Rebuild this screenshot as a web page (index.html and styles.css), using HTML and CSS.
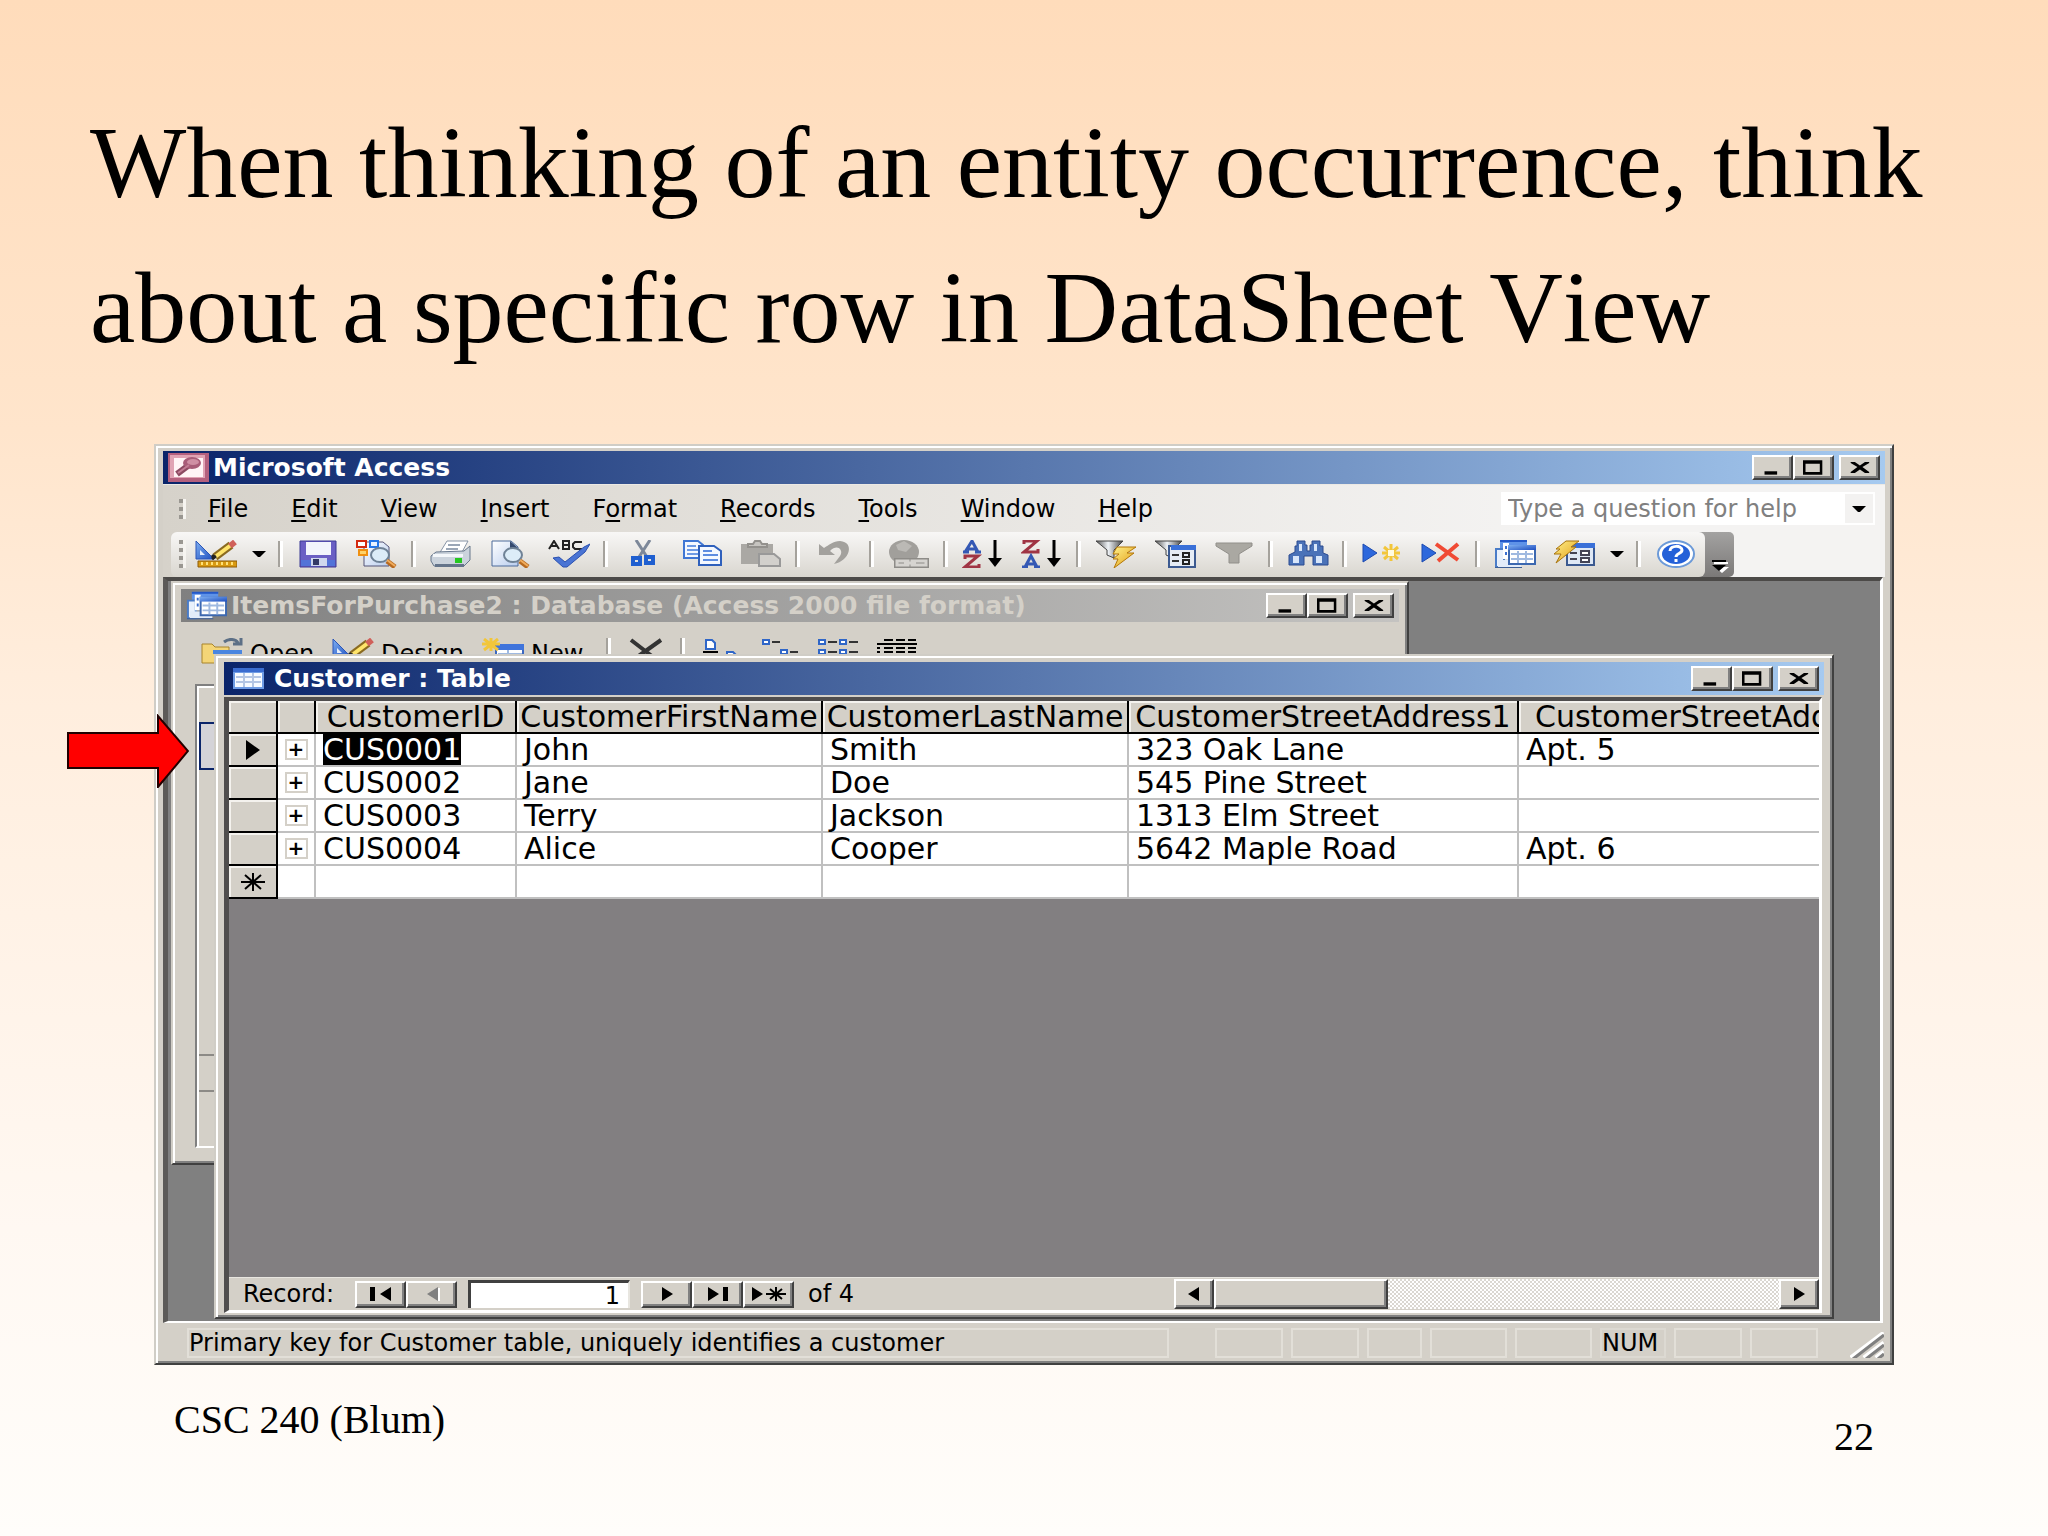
FILE: index.html
```html
<!DOCTYPE html>
<html lang="en">
<head>
<meta charset="utf-8">
<title>Entity occurrence in DataSheet View</title>
<link rel="stylesheet" href="styles.css">
</head>
<body>
<svg class="sprite" aria-hidden="true">
  <defs>
    <linearGradient id="blue" x1="0" y1="0" x2="1" y2="1"><stop offset="0" stop-color="#7fb0f2"/><stop offset="1" stop-color="#1f4fc0"/></linearGradient>
    <linearGradient id="page" x1="0" y1="0" x2="1" y2="1"><stop offset="0" stop-color="#fff"/><stop offset="1" stop-color="#b9cdee"/></linearGradient>
    <linearGradient id="steel" x1="0" y1="0" x2="1" y2="0"><stop offset="0" stop-color="#555"/><stop offset=".45" stop-color="#eef2f6"/><stop offset="1" stop-color="#444"/></linearGradient>
    <linearGradient id="gold" x1="0" y1="0" x2="1" y2="1"><stop offset="0" stop-color="#fff08a"/><stop offset="1" stop-color="#e09a10"/></linearGradient>
  </defs>
  <symbol id="i-min" viewBox="0 0 41 25"><path d="M11 17h15v4H11z"/></symbol>
  <symbol id="i-max" viewBox="0 0 41 25"><path fill-rule="evenodd" d="M8 4h23v17H8zM11 8v10h17V8z"/></symbol>
  <symbol id="i-close" viewBox="0 0 41 25"><path d="M10 6h5l6 4 6-4h5v1l-8 5 8 6v1h-5l-6-4-6 4h-5v-1l8-6-8-5z"/></symbol>
  <symbol id="i-dbwin" viewBox="0 0 42 28">
    <path fill="#5f93e8" d="M6 0h27v8H6z"/><path fill="#2458c8" d="M6 0h27v2H6z"/>
    <path fill="#e9f1fc" stroke="#4a7cc8" stroke-width="2" d="M2 9h8v18H2z"/><path fill="#fff" d="M9 3h6v16H9z"/><path fill="#3b6fd0" d="M11 6h2v3h-2zM11 12h2v3h-2z"/>
    <path fill="#e3ecf9" d="M4 20h23v7H4z"/><path fill="#3d5f96" d="M1 27h27v1H1z"/>
    <path fill="#fff" stroke="#3c68b0" stroke-width="2" d="M15 6h26v18H15z"/><path fill="url(#blue)" d="M14 5h28v5H14z"/>
    <path stroke="#9fb9e0" stroke-width="2" d="M17 14h22M17 19h22M24 11v12M32 11v12"/>
  </symbol>
  <symbol id="i-ruler" viewBox="0 0 42 28">
    <path fill="url(#blue)" stroke="#2a55b8" d="M1 1v18h18z"/><path fill="#e8effa" d="M5 10v5h5z"/>
    <path fill="#d99a12" stroke="#8c5a08" d="M3 21h39v6H3z"/><path stroke="#ffe27a" stroke-width="2" d="M7 22v3M12 22v3M17 22v3M22 22v3M27 22v3M32 22v3M37 22v3"/>
    <path stroke="#8a6a20" stroke-width="8" d="M20 17L36 5"/><path stroke="#ffe46a" stroke-width="4" d="M20 17L36 5"/><path stroke="#d0605a" stroke-width="6" d="M35 6l5-4"/><path stroke="#222" stroke-width="3" d="M17 19l4-3M17 15l3 3"/>
  </symbol>
  <symbol id="i-glass" viewBox="0 0 42 28">
    <ellipse cx="24" cy="15" rx="9" ry="7" fill="#dcecf8" stroke="#6f8296" stroke-width="2"/><path stroke="#b86a20" stroke-width="5" d="M31 21l8 6"/><path stroke="#f0ac5c" stroke-width="2" d="M31 20l8 6"/>
  </symbol>
  <symbol id="i-funnel" viewBox="0 0 42 28"><path fill="url(#steel)" stroke="#444" d="M1 1h27l-9 9v8l-7-3v-5z"/></symbol>
  <symbol id="i-bolt" viewBox="0 0 42 28"><path fill="url(#gold)" stroke="#b37708" d="M22 7h19l-9 6h7L19 28l4-9h-5l6-5h-6z"/></symbol>
  <symbol id="i-az" viewBox="0 0 42 28"><path stroke="#000" stroke-width="3" d="M33 0v22"/><path fill="#000" d="M26 18h14l-7 9z"/></symbol>
  <symbol id="i-down" viewBox="0 0 14 8"><path d="M0 1h14L8 7H6z"/></symbol>
</svg>

<main class="slide">
  <h1 class="headline">When thinking of an entity occurrence, think about a specific row in DataSheet View</h1>

  <section class="frame app">
    <svg class="pointer" viewBox="0 0 122 74" aria-hidden="true"><path d="M1 19h90V2l30 35-30 36V54H1z"/></svg>

    <header class="titlebar">
      <svg class="t-icon" viewBox="0 0 41 29"><path fill="#b4607e" d="M0 0h41v29H0z"/><path fill="#e0a3b4" d="M2 2h35v23H2z"/><path fill="#fff4f6" d="M6 5h29v19H6z"/><path fill="none" stroke="#8c4a62" stroke-width="6" d="M9 21l12-9"/><ellipse cx="24" cy="10" rx="9" ry="6" fill="#a85c78"/><ellipse cx="25" cy="9" rx="6" ry="3" fill="#cf8fa4"/><path stroke="#c27c94" stroke-width="2" d="M10 20l11-8"/></svg>
      <span class="t-text">Microsoft Access</span>
      <span class="t-buttons">
        <button class="wbtn" aria-label="Minimize"><svg><use href="#i-min"/></svg></button>
        <button class="wbtn" aria-label="Maximize"><svg><use href="#i-max"/></svg></button>
        <button class="wbtn wbtn-close" aria-label="Close"><svg><use href="#i-close"/></svg></button>
      </span>
    </header>

    <div class="bars">
      <nav class="menubar">
        <span class="grip grip-3"></span>
        <button class="menu"><u>F</u>ile</button>
        <button class="menu"><u>E</u>dit</button>
        <button class="menu"><u>V</u>iew</button>
        <button class="menu"><u>I</u>nsert</button>
        <button class="menu">F<u>o</u>rmat</button>
        <button class="menu"><u>R</u>ecords</button>
        <button class="menu"><u>T</u>ools</button>
        <button class="menu"><u>W</u>indow</button>
        <button class="menu"><u>H</u>elp</button>
        <span class="ask">
          <input class="ask-input" type="text" placeholder="Type a question for help" aria-label="Type a question for help">
          <button class="ask-drop" aria-label="Show recent questions"><svg class="caret"><use href="#i-down"/></svg></button>
        </span>
      </nav>

      <div class="toolrow">
        <div class="toolbar">
          <span class="grip"></span>
          <button class="tool" aria-label="View"><svg><use href="#i-ruler"/></svg></button>
          <button class="tool-drop" aria-label="View options"><svg class="caret"><use href="#i-down"/></svg></button>
          <span class="sep"></span>
          <button class="tool" aria-label="Save"><svg viewBox="0 0 42 28"><path fill="#6a5fc4" stroke="#3b3a94" d="M3 1h36v26H3z"/><path fill="#5273d8" d="M4 20h34v6H4z"/><path fill="#f2f5fc" d="M9 2h25v13H9z"/><path fill="#cfd8ee" d="M14 18h16v8H14z"/><path fill="#333a66" d="M16 19h6v6h-6z"/></svg></button>
          <button class="tool" aria-label="File search"><svg viewBox="0 0 42 28"><path fill="url(#page)" stroke="#557" d="M8 2h19l6 5v19H8z"/><path fill="#fff" stroke="#d42a10" stroke-width="2" d="M1 1h9v6H1z"/><path fill="#e8f2ff" stroke="#2476e8" stroke-width="2" d="M14 1h8v6h-8z"/><path fill="#ffd36a" stroke="#f09010" stroke-width="2" d="M3 10h8v5H3z"/><use href="#i-glass"/></svg></button>
          <span class="sep"></span>
          <button class="tool" aria-label="Print"><svg viewBox="0 0 42 28"><path fill="#fff" stroke="#8794a6" d="M17 1h21l-7 13H9z"/><path stroke="#9aa6b6" stroke-width="2" d="M18 5h12M16 9h12"/><path fill="#cbd3dc" stroke="#68788c" d="M6 12l28-1 6-5v14l-6 6H4l-3-5v-5z"/><path fill="#f4f7fa" d="M3 14h30v3H3z"/><path fill="#25c820" d="M25 18h7v5h-7z"/><path fill="#64748a" d="M5 24h29v3H5z"/></svg></button>
          <button class="tool" aria-label="Print preview"><svg viewBox="0 0 42 28"><path fill="url(#page)" stroke="#4c6a9a" d="M3 1h19l7 6v19H3z"/><path fill="#34496e" d="M21 1l8 7h-8z"/><use href="#i-glass"/></svg></button>
          <button class="tool" aria-label="Spelling"><svg viewBox="0 0 42 28"><path fill="none" stroke="#222" stroke-width="2" d="M1 9l5-8 5 8M3 6h6M15 1v8h6V5h-6 6V1zM34 2h-7l-2 2v3l2 2h7"/><path fill="#4a74d4" stroke="#2a50b0" d="M5 18l6-1 6 5L36 7l6-3-5 8-18 15h-4z"/></svg></button>
          <span class="sep"></span>
          <button class="tool" aria-label="Cut"><svg viewBox="0 0 42 28"><path stroke="#7d8899" stroke-width="3" d="M14 0l11 17M28 0L17 17"/><path fill="none" stroke="#1f5fd0" stroke-width="4" d="M11 18h7v6h-7zM24 17h7v6h-7z"/></svg></button>
          <button class="tool" aria-label="Copy"><svg viewBox="0 0 42 28"><path fill="#f4f8ff" stroke="#3f76d4" stroke-width="2" d="M3 1h14l5 4v13H3z"/><path stroke="#6e9ae4" stroke-width="2" d="M6 6h9M6 10h12M6 14h12"/><path fill="#f4f8ff" stroke="#2f60bc" stroke-width="2" d="M18 6h15l7 5v14H18z"/><path stroke="#5d8ce0" stroke-width="2" d="M22 11h9M22 15h15M22 20h15"/></svg></button>
          <button class="tool" aria-label="Paste" disabled><svg viewBox="0 0 42 28"><path fill="#aaa8a4" d="M1 4h32v20H1z"/><path fill="#c6c4c0" stroke="#93918d" stroke-width="2" d="M8 7V4h5l2-3h5l2 3h5v3z"/><path fill="#d2d0cc" stroke="#999" stroke-width="2" d="M19 14h15l6 5v7H19z"/></svg></button>
          <span class="sep"></span>
          <button class="tool" aria-label="Undo" disabled><svg viewBox="0 0 42 28"><path fill="#a3a19d" d="M5 4v11h16l-5-4c8-8 14 0 10 5l-6 8c16-3 21-22 6-23-7 0-11 4-16 7z"/></svg></button>
          <span class="sep"></span>
          <button class="tool" aria-label="Insert hyperlink" disabled><svg viewBox="0 0 42 28"><ellipse cx="16" cy="12" rx="15" ry="12" fill="#a19f9b"/><path fill="#bbb9b5" d="M8 5l8-4 8 5-6 6-8-2z"/><path fill="none" stroke="#8e8c88" stroke-width="6" d="M9 21h11v4H9zM24 21h14v4H24zM16 23h12"/><path fill="none" stroke="#d6d4d0" stroke-width="3" d="M9 21h11v4H9zM24 21h14v4H24zM16 23h12"/></svg></button>
          <span class="sep"></span>
          <button class="tool" aria-label="Sort ascending"><svg viewBox="0 0 42 28"><path fill="none" stroke="#3458b4" stroke-width="3" d="M3 12l7-11 6 11M6 9h8M1 12h6M13 12h6"/><path fill="none" stroke="#a03444" stroke-width="3" d="M3 19v-3h13L3 27h14v-3"/><use href="#i-az"/></svg></button>
          <button class="tool" aria-label="Sort descending"><svg viewBox="0 0 42 28"><path fill="none" stroke="#a03444" stroke-width="3" d="M3 4V1h13L3 12h14V9"/><path fill="none" stroke="#3458b4" stroke-width="3" d="M4 27l6-11 6 11M6 24h8M1 27h6M13 27h6"/><use href="#i-az"/></svg></button>
          <span class="sep"></span>
          <button class="tool" aria-label="Filter by selection"><svg viewBox="0 0 42 28"><use href="#i-funnel"/><use href="#i-bolt"/></svg></button>
          <button class="tool" aria-label="Filter by form"><svg viewBox="0 0 42 28"><use href="#i-funnel"/><path fill="#e6ecf4" stroke="#3c5a90" stroke-width="2" d="M15 6h26v21H15z"/><path fill="#3a70d8" d="M17 5h25v5H17z"/><path stroke="#333" stroke-width="2" d="M18 15h7M18 21h7"/><path fill="none" stroke="#222" stroke-width="2" d="M29 13h6v4h-6zM29 20h6v4h-6z"/></svg></button>
          <button class="tool" aria-label="Apply filter" disabled><svg viewBox="0 0 42 28"><path fill="#aaa8a2" stroke="#918f8a" d="M3 3h36v3L26 14v9H16v-9L3 6z"/></svg></button>
          <span class="sep"></span>
          <button class="tool" aria-label="Find"><svg viewBox="0 0 42 28"><path fill="#4a72b8" stroke="#2a4a90" d="M10 1h8v4h2v6h3V5h2V1h8v5h3v7l5 2v10H26v-9h-9v9H2V15l6-3V6h2z"/><path fill="#d8e6fa" d="M6 16h6v7H6zM29 16h6v7h-6zM12 4h3v7h-3zM27 4h3v7h-3z"/></svg></button>
          <span class="sep"></span>
          <button class="tool" aria-label="New record"><svg viewBox="0 0 42 28"><path fill="#2d68dc" stroke="#1d4bb0" d="M2 4l14 9-14 9z"/><path stroke="#f2c63a" stroke-width="3" d="M30 4v17M21 13h18M23 7l14 12M37 7L23 19"/><path fill="#fffbe0" d="M27 10h6v6h-6z"/></svg></button>
          <button class="tool" aria-label="Delete record"><svg viewBox="0 0 42 28"><path fill="#2d68dc" stroke="#1d4bb0" d="M2 4l14 9-14 9z"/><path stroke="#f04a34" stroke-width="4" d="M16 4l22 16M38 4L18 21"/></svg></button>
          <span class="sep"></span>
          <button class="tool" aria-label="Database window"><svg><use href="#i-dbwin"/></svg></button>
          <button class="tool" aria-label="New object"><svg viewBox="0 0 42 28"><path fill="#dfe8f5" stroke="#3c5a90" stroke-width="2" d="M14 4h27v21H14z"/><path fill="#3a70d8" d="M14 3h28v5H14z"/><path stroke="#445" stroke-width="2" d="M17 13h7M17 19h7"/><path fill="#fff" stroke="#445" stroke-width="2" d="M28 11h8v4h-8zM28 18h8v4h-8z"/><path fill="url(#gold)" stroke="#a8740c" d="M13 1h13l-8 6h5L3 23l5-9H1l6-5H3z"/></svg></button>
          <button class="tool-drop" aria-label="New object options"><svg class="caret"><use href="#i-down"/></svg></button>
          <span class="sep"></span>
          <button class="tool" aria-label="Help"><svg viewBox="0 0 42 28"><ellipse cx="21" cy="14" rx="18" ry="13" fill="#fff" stroke="#6c9ad8" stroke-width="2"/><ellipse cx="21" cy="14" rx="14" ry="10" fill="#2460d8"/><path fill="none" stroke="#fff" stroke-width="3" d="M15 11c0-6 12-6 12-1 0 4-6 3-6 7M21 19v3"/></svg></button>
        </div>
        <button class="overflow" aria-label="Toolbar options"><svg viewBox="0 0 18 14"><path fill="#fff" d="M3 3h14v2H3zM4 8h14l-7 6z"/><path fill="#000" d="M1 1h14v2H1zM1 6h14l-7 6z"/></svg></button>
      </div>
    </div>

    <div class="workspace">
      <section class="frame child db-window">
        <header class="titlebar titlebar-off">
          <svg class="t-icon"><use href="#i-dbwin"/></svg>
          <span class="t-text">ItemsForPurchase2 : Database (Access 2000 file format)</span>
          <span class="t-buttons">
            <button class="wbtn" aria-label="Minimize"><svg><use href="#i-min"/></svg></button>
            <button class="wbtn" aria-label="Maximize"><svg><use href="#i-max"/></svg></button>
            <button class="wbtn wbtn-close" aria-label="Close"><svg><use href="#i-close"/></svg></button>
          </span>
        </header>
        <div class="db-tools">
          <button class="db-tool"><svg viewBox="0 0 42 28"><path fill="#f4d577" stroke="#a8842c" d="M1 6h10l3 3h14v16H1z"/><path fill="#4a86e0" d="M12 12h29v4H12z"/><path fill="none" stroke="#5c6f86" stroke-width="3" d="M23 4c5-4 12-3 14 1M40 0v6h-8"/></svg>Open</button>
          <button class="db-tool"><svg><use href="#i-ruler"/></svg>Design</button>
          <button class="db-tool"><svg viewBox="0 0 42 28"><path fill="#fff" stroke="#3c68c0" stroke-width="2" d="M14 7h27v19H14z"/><path fill="#3f74dc" d="M14 6h28v6H14z"/><path stroke="#9fb9e0" stroke-width="2" d="M16 16h24M26 12v13"/><path stroke="#f2c63a" stroke-width="3" d="M9 0v13M0 6h18M2 1l14 11M16 1L2 12"/></svg>New</button>
          <span class="sep"></span>
          <button class="tool" aria-label="Delete"><svg viewBox="0 0 42 28"><path stroke="#333" stroke-width="4" d="M6 2l26 20M36 2L8 22"/></svg></button>
          <span class="sep"></span>
          <button class="tool" aria-label="Large icons"><svg viewBox="0 0 42 28"><path fill="#fff" stroke="#2f66c8" stroke-width="2" d="M7 2h6l3 3v6H7z"/><path stroke="#000" stroke-width="2" d="M4 14h15"/><path fill="#fff" stroke="#2f66c8" stroke-width="2" d="M28 14h6l3 3v6h-9z"/></svg></button>
          <button class="tool" aria-label="Small icons"><svg viewBox="0 0 42 28"><path fill="#fff" stroke="#2f66c8" stroke-width="2" d="M5 2h6v4H5zM23 12h6v4h-6z"/><path stroke="#333" stroke-width="2" d="M14 4h8M32 14h8"/></svg></button>
          <button class="tool" aria-label="List"><svg viewBox="0 0 42 28"><path fill="#fff" stroke="#2f66c8" stroke-width="2" d="M2 2h6v4H2zM23 2h6v4h-6zM2 12h6v4H2zM23 12h6v4h-6z"/><path stroke="#333" stroke-width="2" d="M11 4h9M32 4h9M11 14h9M32 14h9"/></svg></button>
          <button class="tool" aria-label="Details"><svg viewBox="0 0 42 28"><path stroke="#000" stroke-width="2" d="M8 2h9M20 2h9M32 2h8M1 6h40M8 10h9M20 10h9M32 10h8M8 14h9M20 14h9M32 14h8M1 10h3M1 14h3"/></svg></button>
        </div>
        <div class="db-groups"><div class="db-current"></div><div class="db-fold"></div></div>
      </section>

      <section class="frame child table-window">
        <header class="titlebar">
          <svg class="t-icon" viewBox="0 0 41 29"><path fill="#6f9ce4" d="M4 4h31v21H4z"/><path fill="#3a6cd0" d="M4 4h31v4H4z"/><path fill="#f8fbff" d="M6 9h27v14H6z"/><path stroke="#b4c6e4" stroke-width="2" d="M7 13h25M7 18h25M15 9v14M24 9v14"/></svg>
          <span class="t-text">Customer : Table</span>
          <span class="t-buttons">
            <button class="wbtn" aria-label="Minimize"><svg><use href="#i-min"/></svg></button>
            <button class="wbtn" aria-label="Maximize"><svg><use href="#i-max"/></svg></button>
            <button class="wbtn wbtn-close" aria-label="Close"><svg><use href="#i-close"/></svg></button>
          </span>
        </header>
        <div class="sheet">
          <div class="sheet-rows">
            <table class="grid">
              <colgroup><col class="c-select"><col class="c-expand"><col class="c-id"><col class="c-name"><col class="c-name"><col class="c-street"><col></colgroup>
              <thead>
                <tr><th></th><th></th><th>CustomerID</th><th>CustomerFirstName</th><th>CustomerLastName</th><th>CustomerStreetAddress1</th><th class="cut">CustomerStreetAddress2</th></tr>
              </thead>
              <tbody>
                <tr><th><svg class="mark" viewBox="0 0 16 20"><path d="M1 0l14 10L1 20z"/></svg></th><td><button class="expand" aria-label="Expand">+</button></td><td><mark class="picked">CUS0001</mark></td><td>John</td><td>Smith</td><td>323 Oak Lane</td><td>Apt. 5</td></tr>
                <tr><th></th><td><button class="expand" aria-label="Expand">+</button></td><td>CUS0002</td><td>Jane</td><td>Doe</td><td>545 Pine Street</td><td></td></tr>
                <tr><th></th><td><button class="expand" aria-label="Expand">+</button></td><td>CUS0003</td><td>Terry</td><td>Jackson</td><td>1313 Elm Street</td><td></td></tr>
                <tr><th></th><td><button class="expand" aria-label="Expand">+</button></td><td>CUS0004</td><td>Alice</td><td>Cooper</td><td>5642 Maple Road</td><td>Apt. 6</td></tr>
                <tr><th><svg class="star" viewBox="0 0 24 18"><path d="M12 0v18M0 9h24M4 2l16 14M20 2L4 16"/></svg></th><td></td><td></td><td></td><td></td><td></td><td></td></tr>
              </tbody>
            </table>
          </div>
          <div class="recordbar">
            <label class="rec-label" for="rec">Record:</label>
            <button class="rbtn" aria-label="First record"><svg viewBox="0 0 24 14"><path d="M1 0h5v14H1zM22 0v14L11 7z"/></svg></button>
            <button class="rbtn" aria-label="Previous record" disabled><svg viewBox="0 0 24 14"><path fill="#fff" d="M18 1v13h2V1z"/><path fill="#808080" d="M18 0v14L7 7z"/></svg></button>
            <input class="rec-input" id="rec" type="text" value="1">
            <button class="rbtn" aria-label="Next record"><svg viewBox="0 0 24 14"><path d="M7 0v14l11-7z"/></svg></button>
            <button class="rbtn" aria-label="Last record"><svg viewBox="0 0 24 14"><path d="M2 0v14l11-7zM17 0h5v14h-5z"/></svg></button>
            <button class="rbtn" aria-label="New record"><svg class="wide" viewBox="0 0 34 14"><path d="M0 0v14l11-7z"/><path fill="none" stroke="#000" stroke-width="2" d="M24 0v14M14 7h20M18 2l12 10M30 2L18 12"/></svg></button>
            <span class="rec-total">of 4</span>
            <div class="scroll">
              <button class="sbtn" aria-label="Scroll left"><svg viewBox="0 0 12 14"><path d="M11 0v14L0 7z"/></svg></button>
              <div class="track"><div class="thumb"></div></div>
              <button class="sbtn" aria-label="Scroll right"><svg viewBox="0 0 12 14"><path d="M1 0v14l11-7z"/></svg></button>
            </div>
          </div>
        </div>
      </section>
    </div>

    <footer class="statusbar">
      <span class="pane pane-main">Primary key for Customer table, uniquely identifies a customer</span>
      <span class="pane"></span><span class="pane"></span><span class="pane pane-s"></span><span class="pane pane-l"></span><span class="pane pane-l"></span>
      <span class="pane pane-num">NUM</span>
      <span class="pane"></span><span class="pane"></span>
      <svg class="resize" viewBox="0 0 34 26"><path stroke="#fff" stroke-width="5" d="M1 26L34 1M14 26l20-15M26 26l8-6"/><path stroke="#808080" stroke-width="3" d="M3 27L34 3M16 27l18-14M28 27l6-5"/></svg>
    </footer>
  </section>

  <footer class="foot"><span>CSC 240 (Blum)</span><span class="page-no">22</span></footer>
</main>
</body>
</html>
```
FILE: styles.css
```css
* { box-sizing: border-box; }

body {
  margin: 0;
  font-family: "DejaVu Sans", Verdana, sans-serif;
  font-size: 24px;
  color: #000;
}

button, input {
  margin: 0;
  padding: 0;
  border: 0;
  border-radius: 0;
  background: none;
  color: inherit;
  font: inherit;
}

svg { display: block; flex: none; fill: none; }
.sprite { position: absolute; width: 0; height: 0; }

/* Slide */
.slide {
  display: flex;
  flex-direction: column;
  min-height: 100vh;
  padding-top: 90px;
  background: linear-gradient(#ffdcbb, #ffe5cc 28%, #ffeede 46%, #fff8f2 80%, #fffdfa);
}

.headline {
  margin: 0 88px 64px 90px;
  font: 400 102px/145px "Liberation Serif", "Times New Roman", serif;
  font-kerning: none;
}

.foot {
  display: flex;
  justify-content: space-between;
  height: 171px;
  padding: 32px 174px 0;
  font: 40px/46px "Liberation Serif", "Times New Roman", serif;
}
.page-no { padding-top: 17px; }

.pointer {
  position: absolute;
  z-index: 5;
  left: -89px;
  top: 268px;
  width: 122px;
  height: 74px;
  fill: #f00;
  stroke: #200;
  stroke-width: 2px;
}

/* Window frames */
.frame {
  display: flex;
  flex-direction: column;
  border: 2px solid;
  border-color: #d0cdc6 #404040 #404040 #d0cdc6;
  background: #d4d0c8;
  box-shadow: inset 2px 2px #fff, inset -2px -2px #808080;
}
.app { position: relative; flex: 1; margin: 0 154px; padding: 5px 7px; }
.child { position: absolute; padding: 6px 8px 4px; }
.db-window { left: 3px; top: 0; right: 471px; bottom: 156px; }
.table-window { left: 46px; top: 73px; right: 46px; bottom: 2px; }

.titlebar {
  display: flex;
  align-items: center;
  gap: 4px;
  height: 33px;
  padding: 0 5px;
  background: linear-gradient(90deg, #0a246a, #a6caf0);
  color: #fff;
  font-weight: 700;
  font-size: 25px;
  line-height: 30px;
  white-space: nowrap;
}
.titlebar-off { background: linear-gradient(90deg, #808080, #c4c3c1); color: #d4d0c8; }
.t-icon { width: 41px; height: 29px; }
.t-buttons { display: flex; margin-left: auto; }

.wbtn, .rbtn, .sbtn, .thumb {
  border: 2px solid;
  border-color: #fff #404040 #404040 #fff;
  background: #d4d0c8;
  box-shadow: inset -2px -2px #808080;
}
.wbtn { width: 41px; height: 25px; }
.wbtn svg { width: 37px; height: 21px; fill: #000; }
.wbtn-close { margin-left: 5px; }

/* Menu and toolbars */
.bars { border-top: 1px solid #ece9e4; background: linear-gradient(90deg, #d6d2ca, #f4f3f2 80%); }
.menubar { display: flex; align-items: center; height: 47px; padding: 0 10px 0 16px; }
.menu { margin-right: 43px; line-height: 30px; }
.menu u { text-decoration-thickness: 2px; text-underline-offset: 3px; }

.grip {
  width: 7px;
  height: 28px;
  background: repeating-linear-gradient(#9a9791 0 4px, transparent 4px 8px);
  border-right: 3px solid #f6f4f0;
}
.grip-3 { height: 20px; margin-right: 22px; }

.ask { display: flex; width: 374px; height: 33px; margin-left: auto; background: #fff; }
.ask-input { flex: 1; min-width: 0; padding-left: 7px; line-height: 30px; }
.ask-input::placeholder { color: #808080; opacity: 1; }
.ask-drop { display: flex; align-items: center; justify-content: center; width: 28px; margin: 2px; background: #f3f2f1; }
.caret { width: 14px; height: 8px; fill: #000; }

.toolrow { display: flex; height: 45px; padding-left: 8px; }
.toolbar {
  z-index: 1;
  display: flex;
  align-items: center;
  padding: 0 0 2px 8px;
  border-radius: 6px;
  background: linear-gradient(#f8f7f6, #d9d6cf);
}
.tool { display: flex; justify-content: center; width: 59px; }
.tool svg, .db-tool svg { width: 42px; height: 28px; }
.tool-drop { display: flex; justify-content: center; width: 28px; }
.sep { width: 5px; height: 26px; margin: 0 5px; border-left: 2px solid #a5a29c; border-right: 3px solid #fff; }
.overflow {
  display: flex;
  align-items: flex-end;
  justify-content: flex-end;
  width: 36px;
  margin-left: -7px;
  padding: 0 5px 4px 0;
  border-radius: 0 5px 5px 0;
  background: linear-gradient(#a3a2a1, #7b7978);
}
.overflow svg { width: 18px; height: 14px; }

/* Workspace */
.workspace {
  position: relative;
  flex: 1;
  margin-right: 2px;
  border: solid;
  border-width: 4px 3px 2px 5px;
  border-color: #4c4a48 #fff #fff #5c5a58;
  background: #808080;
}

.db-tools { display: flex; align-items: flex-start; height: 62px; padding: 16px 0 0 20px; }
.db-tool { display: flex; gap: 7px; margin-right: 18px; line-height: 32px; }
.db-groups {
  flex: 1;
  display: flex;
  flex-direction: column;
  margin: 0 14px 11px;
  padding: 36px 2px 0;
  border: 2px solid;
  border-color: #808080 #fff #fff #808080;
  box-shadow: inset 2px 2px #fff;
}
.db-current { height: 48px; border: 2px solid #0a246a; background: #d4d3d8; }
.db-fold { height: 38px; margin-top: auto; margin-bottom: 54px; border: 2px solid #8c8a86; border-width: 2px 0; }

/* Datasheet */
.sheet {
  flex: 1;
  display: flex;
  flex-direction: column;
  min-height: 0;
  margin: 2px 2px 0 0;
  border: solid;
  border-width: 4px 3px 3px 5px;
  border-color: #504e4e #fff #fff #504e4e;
  background: #827f81;
}
.sheet-rows { flex: 1; overflow: hidden; }

.grid { width: 100%; table-layout: fixed; border-collapse: separate; border-spacing: 0; font-size: 30px; line-height: 31px; }
.c-select { width: 49px; }
.c-expand { width: 38px; }
.c-id { width: 201px; }
.c-name { width: 306px; }
.c-street { width: 390px; }
.grid th, .grid td { height: 33px; padding: 0 0 0 7px; white-space: nowrap; text-align: left; font-weight: 400; border: solid; border-width: 0 2px 2px 0; }
.grid td { border-color: #c0c0c0; background: #fff; }
.grid th { padding: 0; border-color: #000; background: #d4d0c8; box-shadow: inset 2px 2px #f4f2ee; text-align: center; }
.grid th.cut, .grid td:last-child { border-right-width: 0; }
.grid th.cut { padding-left: 16px; text-align: left; }
.grid td:nth-child(2) { padding: 0; }
.picked { display: block; width: max-content; background: #000; color: #fff; }
.expand { display: block; width: 23px; height: 21px; margin: 0 auto; border: 2px solid #d4d0c8; background: #fff; font: 700 20px/15px "DejaVu Sans", sans-serif; }
.mark { width: 16px; height: 20px; margin: 0 auto; fill: #000; }
.star { width: 24px; height: 18px; margin: 0 auto; stroke: #000; stroke-width: 2px; }

.recordbar { display: flex; align-items: center; height: 33px; padding-left: 14px; border-top: 1px solid #e8e6e0; background: #d4d0c8; line-height: 30px; }
.rec-label { width: 112px; }
.rbtn { display: flex; align-items: center; justify-content: center; width: 51px; height: 27px; }
.rbtn svg { width: 24px; height: 14px; fill: #000; }
.rbtn .wide { width: 34px; }
.rec-input { width: 162px; height: 28px; margin: 0 11px; padding-right: 8px; border: solid; border-width: 3px 2px 0 3px; border-color: #404040 #e8e6e0 #e8e6e0 #404040; background: #fff; text-align: right; line-height: 25px; }
.rec-total { margin-left: 14px; }
.scroll { display: flex; width: 645px; height: 30px; margin-left: auto; }
.sbtn { display: flex; align-items: center; justify-content: center; width: 40px; }
.sbtn svg { width: 12px; height: 14px; fill: #000; }
.track { flex: 1; background: repeating-conic-gradient(#dad7d1 0 25%, #fff 0 50%) 0 0 / 4px 4px; }
.thumb { width: 174px; height: 30px; }

/* Status bar */
.statusbar { display: flex; gap: 8px; height: 35px; padding: 5px 1px 0 24px; line-height: 26px; white-space: nowrap; }
.pane { width: 68px; height: 30px; border: 2px solid #e2dfd8; }
.pane-main { flex: 1; margin-right: 38px; }
.pane-s { width: 55px; }
.pane-l { width: 77px; }
.pane-num { width: 66px; border-color: #dcd9d2; }
.resize { width: 34px; height: 26px; margin: 4px 0 0 24px; }
```
